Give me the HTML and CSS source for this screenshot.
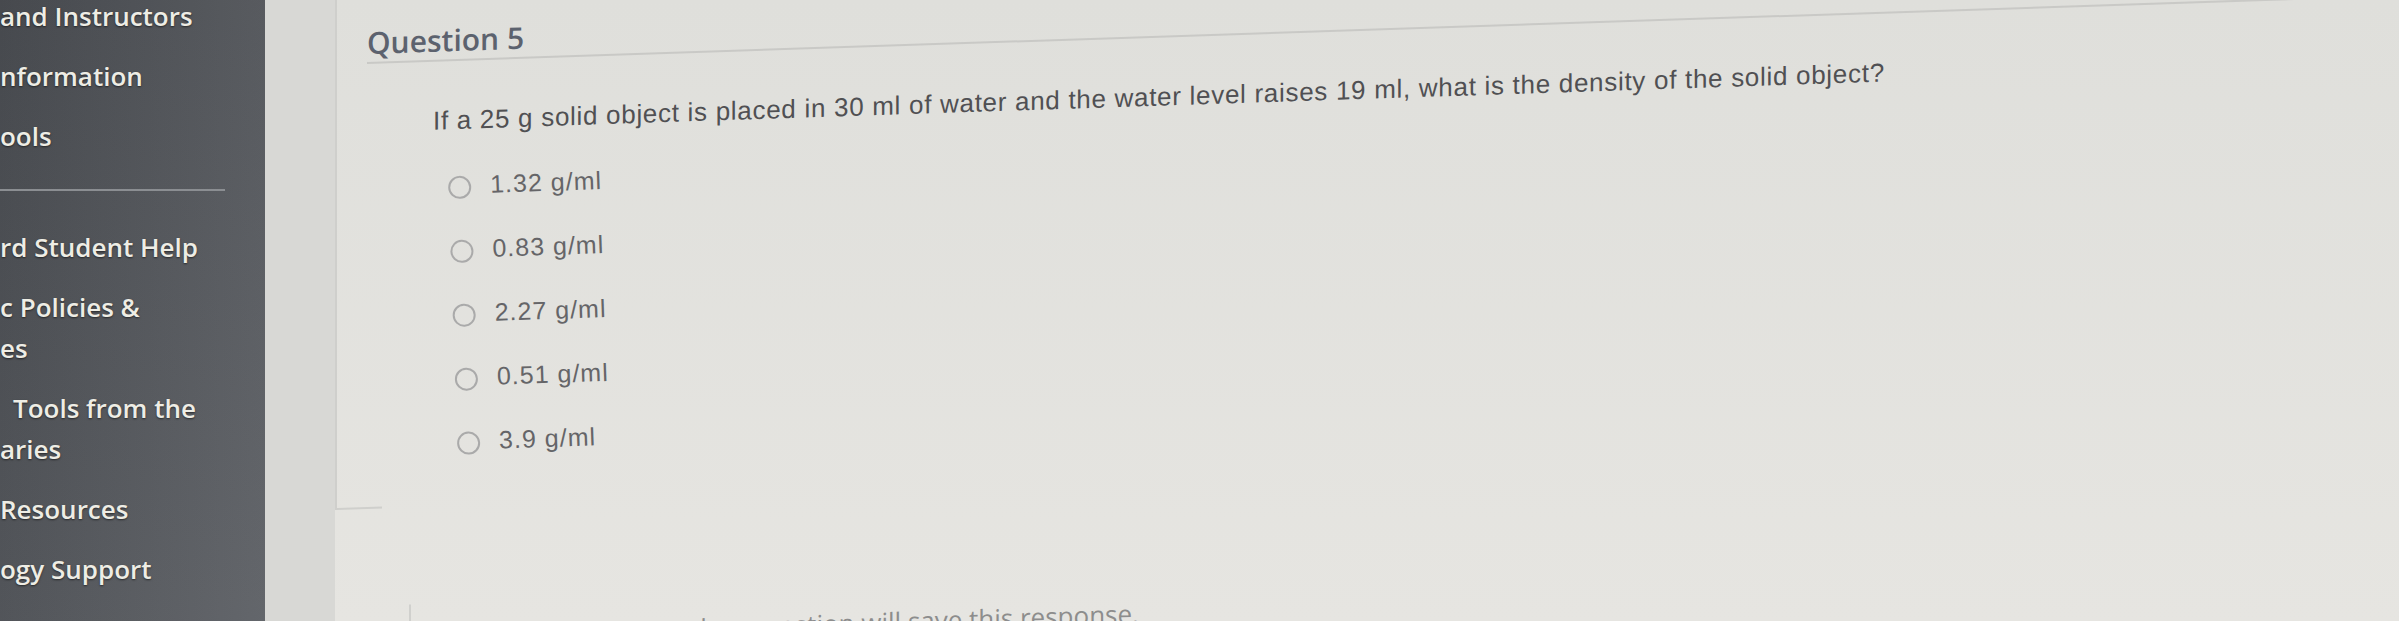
FILE: index.html
```html
<!DOCTYPE html>
<html lang="en">
<head>
    <meta charset="UTF-8">
    <meta name="viewport" content="width=device-width, initial-scale=1.0">
    <title>Question 5</title>
    <link rel="stylesheet" href="styles.css">
</head>
<body>
    <nav class="course-menu">
        <ul class="menu-list">
            <li>and Instructors</li>
            <li>nformation</li>
            <li>ools</li>
            <li class="menu-divider"></li>
            <li>rd Student Help</li>
            <li>c Policies &amp;<br>es</li>
            <li><span class="menu-indent">Tools from the</span><br>aries</li>
            <li>Resources</li>
            <li>ogy Support</li>
        </ul>
    </nav>

    <main class="content">
        <section class="question-box">
            <div class="question-body">
                <h2 class="question-title">Question 5</h2>
                <p class="question-text">If a 25 g solid object is placed in 30 ml of water and the water level raises 19 ml, what is the density of the solid object?</p>
                <ul class="answers">
                    <li><label class="answer"><input type="radio" name="q5"> 1.32 g/ml</label></li>
                    <li><label class="answer"><input type="radio" name="q5"> 0.83 g/ml</label></li>
                    <li><label class="answer"><input type="radio" name="q5"> 2.27 g/ml</label></li>
                    <li><label class="answer"><input type="radio" name="q5"> 0.51 g/ml</label></li>
                    <li><label class="answer"><input type="radio" name="q5"> 3.9 g/ml</label></li>
                </ul>
            </div>
        </section>
        <p class="save-note">Moving to another question will save this response.</p>
    </main>
</body>
</html>
```

FILE: styles.css
```css
body {
    margin: 0;
    height: 621px;
    overflow: hidden;
    display: flex;
    font-family: "Open Sans", "Liberation Sans", sans-serif;
    background: linear-gradient(to right, #d8d8d5 0, #d8d8d5 335px, transparent 335px),
                linear-gradient(to bottom, #dfdfdb, #e6e5e1);
}

/* left course menu */
.course-menu {
    width: 265px;
    flex-shrink: 0;
    height: 621px;
    overflow: hidden;
    background: linear-gradient(to bottom, rgba(0, 0, 0, 0.06), rgba(255, 255, 255, 0.04)),
                linear-gradient(to right, #4b4e53, #5d6065);
}

.menu-list {
    list-style: none;
    margin: -4px 0 0;
    padding: 0;
}

.menu-list li {
    font-size: 26px;
    font-weight: 600;
    line-height: 41px;
    color: #eeede5;
    text-shadow: 0 1px 2px rgba(0, 0, 0, 0.55);
    white-space: nowrap;
    margin-bottom: 19px;
}

.menu-list .menu-divider {
    width: 225px;
    height: 2px;
    background-color: #8b8e92;
    margin: 32px 0 36px;
}

.menu-indent {
    padding-left: 13px;
}

/* question area, tilted a little like the photo */
.content {
    flex: 1;
    margin-left: 70px;
    display: flex;
    flex-direction: column;
    transform: skewY(-1.9deg);
    transform-origin: 0 0;
}

.question-box {
    height: 510px;
    flex-shrink: 0;
    display: flex;
    flex-direction: column;
    border-left: 2px solid #cfcfcc;
}

.question-box::after {
    content: "";
    width: 45px;
    border-bottom: 2px solid #cfcfcc;
}

.question-body {
    flex: 1;
    padding-left: 30px;
}

.question-title {
    margin: 26px 0 0;
    padding-bottom: 1px;
    font-size: 30px;
    font-weight: 600;
    line-height: 36px;
    color: #5c626e;
    border-bottom: 2px solid #c9c9c6;
}

.question-text {
    margin: 43px 0 0 66px;
    font-family: "Liberation Sans", Arial, sans-serif;
    font-size: 26px;
    letter-spacing: 0.7px;
    line-height: 32px;
    color: #505053;
    white-space: nowrap;
}

.answers {
    list-style: none;
    margin: 17px 0 0 80px;
    padding: 0;
    transform: skewX(2deg);
    transform-origin: 0 0;
}

.answer {
    display: flex;
    align-items: center;
    gap: 19px;
    height: 64px;
    font-family: "Liberation Sans", Arial, sans-serif;
    font-size: 25px;
    letter-spacing: 1px;
    color: #656568;
}

.answer input {
    appearance: none;
    -webkit-appearance: none;
    box-sizing: border-box;
    width: 23px;
    height: 23px;
    margin: 5px 0 0;
    border: 2px solid #aaaaaa;
    border-radius: 50%;
    background: transparent;
}

.save-note {
    flex-shrink: 0;
    margin: 97px 0 0 74px;
    padding: 15px 0 0 107px;
    border-left: 2px solid #d0d0cd;
    font-size: 26px;
    line-height: 36px;
    color: #8d8d8d;
    white-space: nowrap;
}
```
